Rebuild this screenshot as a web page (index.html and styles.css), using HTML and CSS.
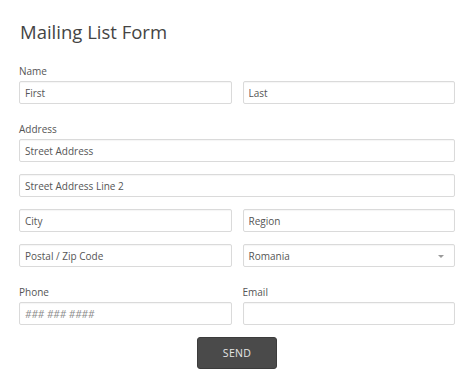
FILE: index.html
```html
<!DOCTYPE html>
<html>
<head>
<meta charset="utf-8">
<link rel="stylesheet" href="styles.css">
</head>
<body>
<form class="form">
  <h1 class="title">Mailing List Form</h1>

  <div class="group">
    <label class="label">Name</label>
    <div class="row">
      <input class="field" type="text" placeholder="First">
      <input class="field" type="text" placeholder="Last">
    </div>
  </div>

  <div class="group">
    <label class="label">Address</label>
    <div class="stack">
      <input class="field" type="text" placeholder="Street Address">
      <input class="field" type="text" placeholder="Street Address Line 2">
      <div class="row">
        <input class="field" type="text" placeholder="City">
        <input class="field" type="text" placeholder="Region">
      </div>
      <div class="row">
        <input class="field" type="text" placeholder="Postal / Zip Code">
        <div class="select">
          <span class="select-value">Romania</span>
          <span class="select-arrow"></span>
        </div>
      </div>
    </div>
  </div>

  <div class="group">
    <div class="row">
      <div class="col">
        <label class="label">Phone</label>
        <input class="field phone" type="text" placeholder="### ### ####">
      </div>
      <div class="col">
        <label class="label">Email</label>
        <input class="field" type="text">
      </div>
    </div>
  </div>

  <div class="actions">
    <button class="send" type="button">SEND</button>
  </div>
</form>
</body>
</html>
```

FILE: styles.css
```css
html, body {
  margin: 0;
  padding: 0;
  background: #ffffff;
}

body {
  font-family: "Open Sans", "Liberation Sans", sans-serif;
  color: #555555;
}

.form {
  padding: 18px 19px 0 19px;
  display: flex;
  flex-direction: column;
}

.title {
  margin: 0;
  font-size: 18.5px;
  line-height: 28px;
  font-weight: 400;
  color: #444444;
  padding-left: 1px;
}

.group {
  margin-top: 18px;
  display: flex;
  flex-direction: column;
}

.label {
  display: block;
  font-size: 10px;
  line-height: 14px;
  color: #555555;
  margin-bottom: 3px;
}

.stack {
  display: flex;
  flex-direction: column;
  gap: 12px;
}

.row {
  display: grid;
  grid-template-columns: 1fr 1fr;
  column-gap: 11px;
}

.col {
  display: flex;
  flex-direction: column;
}

.field,
.select {
  box-sizing: border-box;
  height: 23px;
  width: 100%;
  margin: 0;
  padding: 0 5px;
  border: 1px solid #dadada;
  border-radius: 2px;
  box-shadow: inset 0 1px 1px rgba(0, 0, 0, 0.04);
  background: #ffffff;
  font-family: "Open Sans", "Liberation Sans", sans-serif;
  font-size: 10px;
  color: #555555;
  outline: none;
}

.field::placeholder {
  color: #555555;
  opacity: 1;
}

.field.phone::placeholder {
  color: #8a8a8a;
  font-style: italic;
}

.select {
  position: relative;
  display: flex;
  align-items: center;
}

.select-arrow {
  position: absolute;
  right: 10px;
  top: 10px;
  width: 0;
  height: 0;
  border-left: 3px solid transparent;
  border-right: 3px solid transparent;
  border-top: 3px solid #9a9a9a;
}

.actions {
  margin-top: 12px;
  display: flex;
  justify-content: center;
}

.send {
  width: 80px;
  height: 32px;
  background: #4a4a4a;
  border: 1px solid #3c3c3c;
  border-radius: 3px;
  color: #e6e6e6;
  font-family: "Open Sans", "Liberation Sans", sans-serif;
  font-size: 10.5px;
  letter-spacing: 0.3px;
  padding: 0;
  cursor: pointer;
}
```
